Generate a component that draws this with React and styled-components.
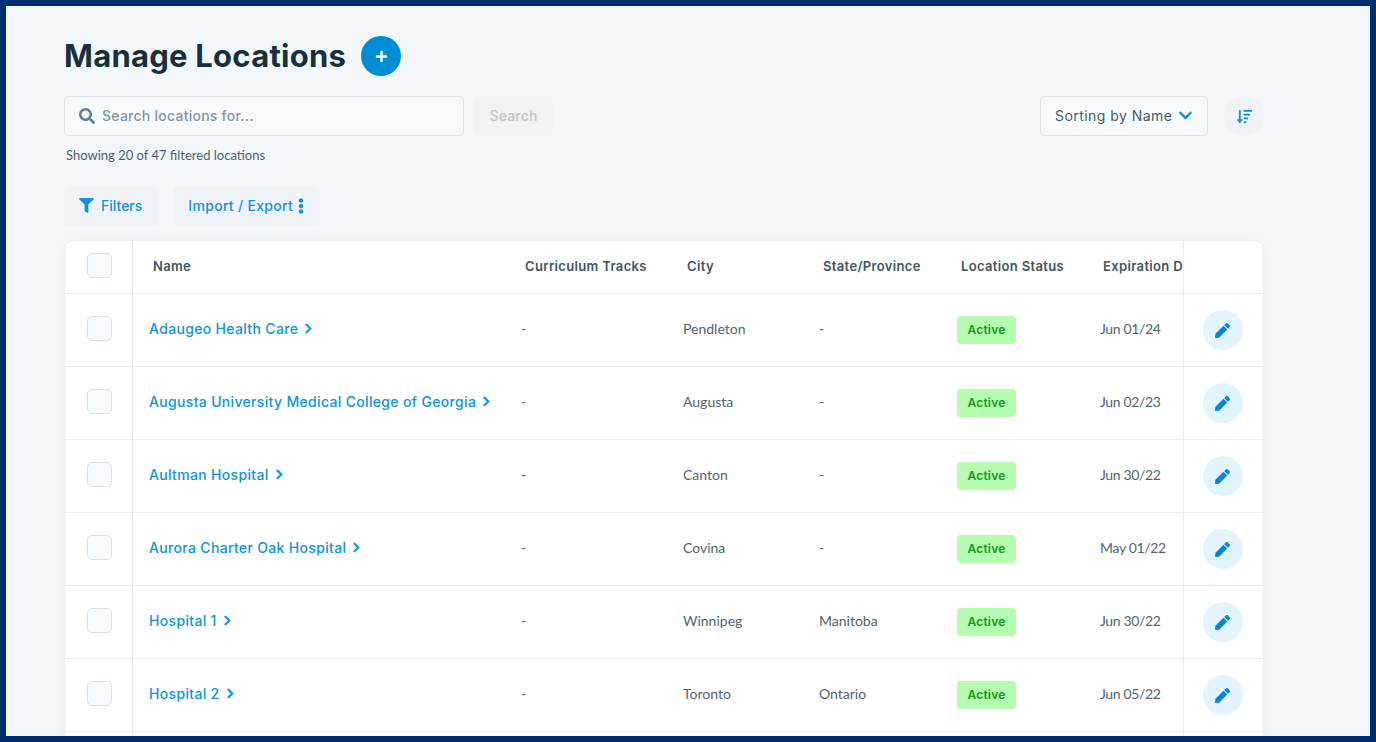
import styled, { createGlobalStyle } from "styled-components";
import {
  FaChevronDown,
  FaChevronRight,
  FaEllipsisV,
  FaFilter,
  FaPen,
  FaPlus,
  FaSearch,
  FaSortAmountDown,
} from "react-icons/fa";

const locations = [
  { name: "Adaugeo Health Care", city: "Pendleton", state: "-", expires: "Jun 01/24" },
  { name: "Augusta University Medical College of Georgia", city: "Augusta", state: "-", expires: "Jun 02/23" },
  { name: "Aultman Hospital", city: "Canton", state: "-", expires: "Jun 30/22" },
  { name: "Aurora Charter Oak Hospital", city: "Covina", state: "-", expires: "May 01/22" },
  { name: "Hospital 1", city: "Winnipeg", state: "Manitoba", expires: "Jun 30/22" },
  { name: "Hospital 2", city: "Toronto", state: "Ontario", expires: "Jun 05/22" },
  { name: "Hospital 3", city: "Ottawa", state: "Ontario", expires: "Jun 05/22" },
];

export default function App() {
  return (
    <>
      <GlobalStyle />
      <Frame>
        <Page>
          <TitleRow>
            <Title>Manage Locations</Title>
            <AddButton aria-label="Add location">
              <FaPlus />
            </AddButton>
          </TitleRow>

          <SearchRow>
            <SearchBox>
              <FaSearch />
              <SearchInput placeholder="Search locations for..." />
            </SearchBox>
            <SearchButton>Search</SearchButton>
            <SortSelect>
              Sorting by Name
              <FaChevronDown />
            </SortSelect>
            <SortToggle aria-label="Sort direction">
              <FaSortAmountDown />
            </SortToggle>
          </SearchRow>

          <Showing>Showing 20 of 47 filtered locations</Showing>

          <Actions>
            <ActionButton>
              <FaFilter />
              Filters
            </ActionButton>
            <ActionButton $wide>
              Import / Export
              <FaEllipsisV />
            </ActionButton>
          </Actions>

          <Table>
            <HeadRow>
              <CheckCell>
                <Checkbox />
              </CheckCell>
              <HeadCell>Name</HeadCell>
              <HeadCell>Curriculum Tracks</HeadCell>
              <HeadCell>City</HeadCell>
              <HeadCell>State/Province</HeadCell>
              <HeadCell>Location Status</HeadCell>
              <HeadDate>Expiration Date</HeadDate>
              <EditCell />
            </HeadRow>
            {locations.map((location) => (
              <Row key={location.name}>
                <CheckCell>
                  <Checkbox />
                </CheckCell>
                <Cell>
                  <NameLink href="#">
                    {location.name}
                    <FaChevronRight />
                  </NameLink>
                </Cell>
                <Cell>-</Cell>
                <Cell>{location.city}</Cell>
                <Cell>{location.state}</Cell>
                <StatusCell>
                  <Status>Active</Status>
                </StatusCell>
                <DateCell>{location.expires}</DateCell>
                <EditCell>
                  <EditButton aria-label={`Edit ${location.name}`}>
                    <FaPen />
                  </EditButton>
                </EditCell>
              </Row>
            ))}
          </Table>
        </Page>
      </Frame>
    </>
  );
}

const GlobalStyle = createGlobalStyle`
  html, body {
    margin: 0;
    height: 100%;
    overflow: hidden;
  }
  * {
    box-sizing: border-box;
  }
`;

const headingFont = `"Inter", "Noto Sans", sans-serif`;
const bodyFont = `"Lato", "Noto Sans", sans-serif`;
const columns = "68px 372px 162px 136px 138px 143px 99px 80px";

const Frame = styled.div`
  height: 742px;
  border: 6px solid #002d6d;
  background: #f4f7fa;
  overflow: hidden;
`;

const Page = styled.main`
  width: 1258px;
  padding: 30px 0 0 58px;
`;

const TitleRow = styled.div`
  display: flex;
  align-items: center;
  gap: 15px;
  height: 40px;
`;

const Title = styled.h1`
  margin: 0 0 2px;
  font-family: ${headingFont};
  font-size: 31px;
  font-weight: 700;
  letter-spacing: 0.25px;
  color: #16303f;
`;

const AddButton = styled.button`
  display: flex;
  align-items: center;
  justify-content: center;
  width: 40px;
  height: 40px;
  padding: 0;
  border: none;
  border-radius: 50%;
  background: #008cd6;
  color: #fff;
  font-size: 13px;
`;

const SearchRow = styled.div`
  display: flex;
  align-items: center;
  margin-top: 20px;
`;

const SearchBox = styled.label`
  display: flex;
  align-items: center;
  gap: 7px;
  width: 400px;
  height: 40px;
  padding: 0 14px;
  border: 1px solid #d9dfe5;
  border-radius: 6px;
  background: #f8fbfe;
  color: #5e8190;
  font-size: 16px;
`;

const SearchInput = styled.input`
  flex: 1;
  padding: 0 0 2px;
  border: none;
  outline: none;
  background: transparent;
  font-family: ${headingFont};
  font-size: 14px;
  font-weight: 500;
  letter-spacing: 0.25px;
  &::placeholder {
    color: #84949f;
    opacity: 1;
  }
`;

const SearchButton = styled.button`
  width: 79px;
  height: 40px;
  margin-left: 10px;
  padding: 0 0 1px;
  border: none;
  border-radius: 6px;
  background: #eff2f6;
  color: #bcc5cc;
  font-family: ${headingFont};
  font-size: 14px;
  font-weight: 500;
  letter-spacing: 0.2px;
`;

const SortSelect = styled.div`
  display: flex;
  align-items: center;
  justify-content: space-between;
  width: 168px;
  height: 40px;
  margin-left: auto;
  padding: 0 14px 1px;
  border: 1px solid #d9dfe5;
  border-radius: 6px;
  background: #f8fbfe;
  color: #415c69;
  font-family: ${headingFont};
  font-size: 14px;
  letter-spacing: 0.45px;
  svg {
    color: #0f93dc;
    font-size: 15px;
  }
`;

const SortToggle = styled.button`
  display: flex;
  align-items: center;
  justify-content: center;
  width: 40px;
  height: 40px;
  margin-left: 16px;
  padding: 0;
  border: none;
  border-radius: 50%;
  background: #eff2f6;
  color: #0f93dc;
  font-size: 15px;
`;

const Showing = styled.p`
  margin: 11px 0 0 2px;
  font-family: ${bodyFont};
  font-size: 13px;
  line-height: 17px;
  color: #4b5f6b;
`;

const Actions = styled.div`
  display: flex;
  gap: 15px;
  margin-top: 22px;
`;

const ActionButton = styled.button`
  display: flex;
  align-items: center;
  gap: ${(props) => (props.$wide ? "5px" : "7px")};
  height: 40px;
  padding: 0 16px 1px 15px;
  border: none;
  border-radius: 6px;
  background: #eff2f6;
  color: #0f93dc;
  font-family: ${headingFont};
  font-size: 14px;
  font-weight: 500;
  letter-spacing: ${(props) => (props.$wide ? "0.3px" : "0")};
  svg {
    width: ${(props) => (props.$wide ? "6px" : "15px")};
    height: ${(props) => (props.$wide ? "16px" : "15px")};
  }
`;

const Table = styled.section`
  margin-top: 14px;
  border: 1px solid #eef1f4;
  border-radius: 10px 10px 0 0;
  background: #fff;
  box-shadow: 0 0 16px rgba(30, 70, 110, 0.04);
`;

const HeadRow = styled.div`
  display: grid;
  grid-template-columns: ${columns};
  height: 53px;
  border-bottom: 1px solid #e9edf1;
`;

const Row = styled(HeadRow)`
  height: 73px;
`;

const CheckCell = styled.div`
  display: flex;
  align-items: center;
  justify-content: center;
  padding: 0 0 3px 2px;
  border-right: 1px solid #e9edf1;
`;

const Checkbox = styled.span`
  width: 25px;
  height: 25px;
  border: 1px solid #d9dfe5;
  border-radius: 5px;
  background: #f8fbfe;
`;

const HeadCell = styled.div`
  display: flex;
  align-items: center;
  padding: 0 0 2px 20px;
  overflow: hidden;
  white-space: nowrap;
  font-family: ${headingFont};
  font-size: 13px;
  font-weight: 600;
  letter-spacing: 0.35px;
  color: #3e5663;
`;

const HeadDate = styled(HeadCell)`
  padding-left: 19px;
`;

const Cell = styled.div`
  display: flex;
  align-items: center;
  padding: 0 0 4px 16px;
  font-family: ${bodyFont};
  font-size: 14px;
  color: #50646f;
`;

const StatusCell = styled(Cell)`
  padding-bottom: 0;
`;

const DateCell = styled(Cell)`
  letter-spacing: -0.35px;
`;

const NameLink = styled.a`
  display: flex;
  align-items: center;
  gap: 5px;
  font-family: ${headingFont};
  font-size: 14px;
  font-weight: 500;
  letter-spacing: 0.33px;
  color: #0f93dc;
  text-decoration: none;
  svg {
    font-size: 11px;
    stroke: currentColor;
    stroke-width: 30px;
  }
`;

const Status = styled.span`
  display: flex;
  align-items: center;
  justify-content: center;
  width: 59px;
  height: 28px;
  padding-bottom: 2px;
  border-radius: 4px;
  background: #b5fdb0;
  color: #14961a;
  font-family: ${headingFont};
  font-size: 12px;
  font-weight: 600;
  letter-spacing: 0.2px;
`;

const EditCell = styled.div`
  display: flex;
  align-items: center;
  justify-content: center;
  padding-right: 2px;
  border-left: 1px solid #e9edf1;
`;

const EditButton = styled.button`
  display: flex;
  align-items: center;
  justify-content: center;
  width: 40px;
  height: 40px;
  padding: 0;
  border: none;
  border-radius: 50%;
  background: #e2f4fe;
  color: #0a86cf;
  font-size: 15px;
`;
